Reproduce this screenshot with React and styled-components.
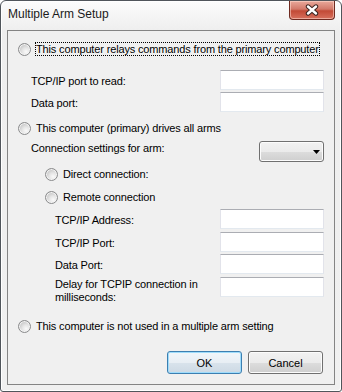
import React from "react";
import styled, { createGlobalStyle } from "styled-components";

const GlobalStyle = createGlobalStyle`
  html, body {
    margin: 0;
    padding: 0;
    background: #ffffff;
  }
  body {
    font-family: "Liberation Sans", Arial, sans-serif;
    font-size: 11px;
    color: #000;
  }
`;

const Window = styled.div`
  box-sizing: border-box;
  width: 342px;
  height: 392px;
  display: flex;
  flex-direction: column;
  padding: 0 6px 6px;
  border: 1px solid #50555b;
  border-radius: 6px 6px 3px 3px;
  background: linear-gradient(#fcfcfc, #eeeeee 30px, #f0f0f0);
  box-shadow: inset 1px 1px 0 #ffffff, inset -1px -1px 0 #ffffff;
`;

const TitleBar = styled.div`
  height: 29px;
  display: flex;
  align-items: flex-start;
  justify-content: space-between;
`;

const Title = styled.span`
  margin: 6px 0 0 1px;
  font-size: 12px;
  line-height: 15px;
  color: #1a1a1a;
`;

const CloseButton = styled.div`
  box-sizing: border-box;
  width: 46px;
  height: 19px;
  display: flex;
  align-items: center;
  justify-content: center;
  border: 1px solid #6e2a20;
  border-top: none;
  border-radius: 0 0 4px 4px;
  background: linear-gradient(#e9a99b, #d2796a 45%, #c24a36 55%, #d7705d);
  box-shadow: inset 0 0 0 1px rgba(255, 220, 210, 0.55);
`;

const Client = styled.div`
  flex: 1;
  display: flex;
  flex-direction: column;
  border: 1px solid #848484;
  background: #f0f0f0;
  letter-spacing: -0.15px;
`;

const Row = styled.div`
  display: flex;
  align-items: ${(p) => p.$align || "center"};
  height: ${(p) => p.$h}px;
  margin-top: ${(p) => p.$top}px;
  padding-left: ${(p) => p.$indent}px;
  padding-right: 10px;
`;

const RadioCircle = styled.span`
  box-sizing: border-box;
  flex: none;
  width: 13px;
  height: 13px;
  border-radius: 50%;
  border: 1px solid #8a8b8c;
  background: radial-gradient(circle at 65% 70%, #fafafa 0, #e6e6e6 35%, #bdbdbd 85%);
  box-shadow: inset 0 0 0 1px #f3f3f3;
`;

const RadioText = styled.span`
  margin-left: 4px;
  line-height: 12px;
  border: 1px ${(p) => (p.$focused ? "dotted #000" : "solid transparent")};
  white-space: nowrap;
`;

const FieldLabel = styled.span`
  line-height: 13px;
  padding-top: ${(p) => p.$pad ?? 2}px;
  width: ${(p) => (p.$wide ? "150px" : "auto")};
`;

const TextBox = styled.div`
  box-sizing: border-box;
  margin-left: auto;
  width: 104px;
  height: 20px;
  background: #ffffff;
  border: 1px solid #e2e3ea;
  border-top-color: #abadb3;
  border-bottom-color: #e3e9ef;
  flex: none;
`;

const DropDown = styled.div`
  box-sizing: border-box;
  margin-left: auto;
  width: 65px;
  height: 21px;
  display: flex;
  align-items: center;
  justify-content: flex-end;
  padding-right: 3px;
  border: 1px solid #707070;
  border-radius: 3px;
  background: linear-gradient(#f2f2f2, #ebebeb 50%, #dddddd 50%, #cfcfcf);
  box-shadow: inset 0 0 0 1px #fcfcfc;
`;

const ButtonBar = styled.div`
  display: flex;
  justify-content: flex-end;
  gap: 6px;
  margin-top: 18px;
  padding-right: 11px;
`;

const Button = styled.div`
  box-sizing: border-box;
  width: 75px;
  height: 23px;
  display: flex;
  align-items: center;
  justify-content: center;
  border: 1px solid ${(p) => (p.$default ? "#3c7fb1" : "#707070")};
  border-radius: 3px;
  background: ${(p) =>
    p.$default
      ? "linear-gradient(#f1f6fa, #e8eef4 50%, #d9e3ec 50%, #cdd9e4)"
      : "linear-gradient(#f2f2f2, #ebebeb 50%, #dddddd 50%, #cfcfcf)"};
  box-shadow: inset 0 0 0 1px ${(p) => (p.$default ? "#9fdcfb" : "#fcfcfc")};
  letter-spacing: 0;
`;

function Radio({ label, indent, top, focused }) {
  return (
    <Row $h={14} $top={top} $indent={indent}>
      <RadioCircle />
      <RadioText $focused={focused}>{label}</RadioText>
    </Row>
  );
}

function Field({ label, indent, top, h = 20, align, pad, wide }) {
  return (
    <Row $h={h} $top={top} $indent={indent} $align={align}>
      <FieldLabel $pad={pad} $wide={wide}>
        {label}
      </FieldLabel>
      <TextBox />
    </Row>
  );
}

export default function App() {
  return (
    <>
      <GlobalStyle />
      <Window>
        <TitleBar>
          <Title>Multiple Arm Setup</Title>
          <CloseButton>
            <svg width="14" height="12" viewBox="0 0 14 12">
              <path d="M3 2.5 L11 9.5 M11 2.5 L3 9.5" stroke="#3a2420" strokeWidth="4.4" strokeLinecap="round" />
              <path d="M3 2.5 L11 9.5 M11 2.5 L3 9.5" stroke="#ffffff" strokeWidth="2.4" strokeLinecap="round" />
            </svg>
          </CloseButton>
        </TitleBar>
        <Client>
          <Radio
            top={11}
            indent={10}
            focused
            label="This computer relays commands from the primary computer"
          />
          <Field top={14} indent={23} label="TCP/IP port to read:" />
          <Field top={2} indent={23} label="Data port:" />
          <Radio top={9} indent={10} label="This computer (primary) drives all arms" />
          <Row $h={21} $top={6} $indent={23} $align="flex-start">
            <FieldLabel $pad={1}>Connection settings for arm:</FieldLabel>
            <DropDown>
              <svg width="7" height="4" viewBox="0 0 7 4">
                <polygon points="0,0 7,0 3.5,4" fill="#000" />
              </svg>
            </DropDown>
          </Row>
          <Radio top={5} indent={37} label="Direct connection:" />
          <Radio top={9} indent={37} label="Remote connection" />
          <Field top={5} indent={47} label="TCP/IP Address:" />
          <Field top={3} indent={47} label="TCP/IP Port:" />
          <Field top={2} indent={47} label="Data Port:" />
          <Field
            top={3}
            h={26}
            indent={47}
            align="flex-start"
            pad={1}
            wide
            label="Delay for TCPIP connection in milliseconds:"
          />
          <Radio top={16} indent={10} label="This computer is not used in a multiple arm setting" />
          <ButtonBar>
            <Button $default>OK</Button>
            <Button>Cancel</Button>
          </ButtonBar>
        </Client>
      </Window>
    </>
  );
}
